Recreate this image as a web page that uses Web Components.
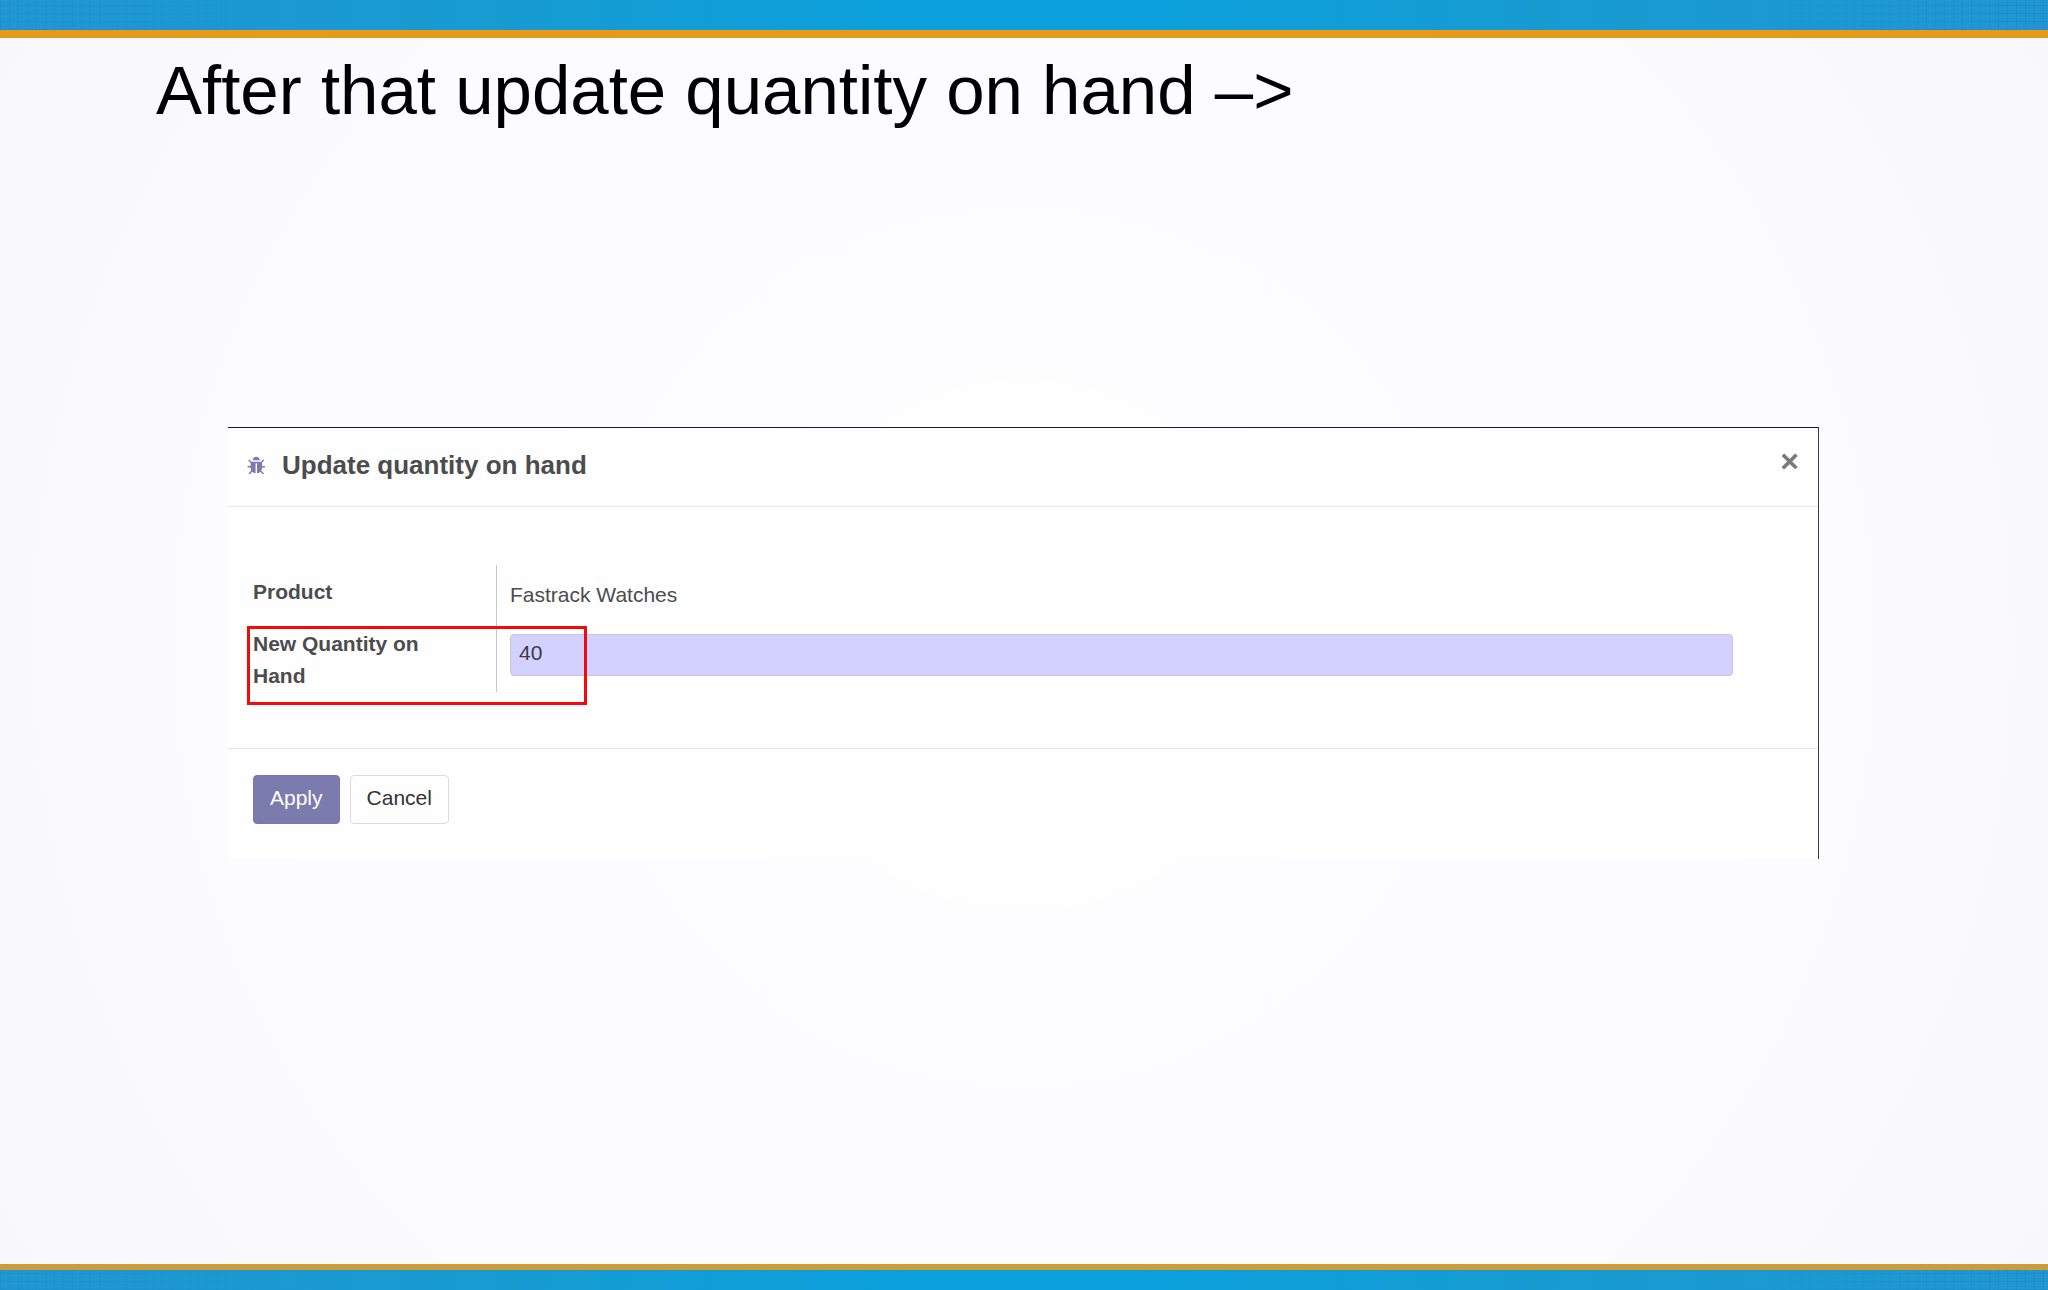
<!DOCTYPE html>
<html lang="en">
<head>
<meta charset="utf-8">
<title>Update quantity on hand</title>
<style>
  body { margin: 0; font-family: "Liberation Sans", Arial, sans-serif; color: #4c4c4e; }
</style>
</head>
<body>
<slide-page>
  <span slot="title">After that update quantity on hand –&gt;</span>
  <modal-dialog>
    <span slot="title">Update quantity on hand</span>
    <static-field label="Product">Fastrack Watches</static-field>
    <quantity-field label="New Quantity on Hand" value="40"></quantity-field>
    <action-button slot="actions" primary>Apply</action-button>
    <action-button slot="actions">Cancel</action-button>
  </modal-dialog>
</slide-page>

<script>
function component(name, markup, setup) {
  const template = document.createElement('template');
  template.innerHTML = markup;
  customElements.define(name, class extends HTMLElement {
    constructor() {
      super();
      this.attachShadow({ mode: 'open' }).append(template.content.cloneNode(true));
    }
    connectedCallback() { if (setup) setup(this, this.shadowRoot); }
  });
}

component('slide-page', `
  <style>
    :host {
      display: flex; flex-direction: column; min-height: 100vh;
      background:
        radial-gradient(circle at 50% 50%, #fefefe 0, #fefefe 262px, #fdfcfe 272px, #fcfbfe 820px, #faf9fc 930px, #f8f7fb 100%);
    }
    .band { background: linear-gradient(90deg, #2196d2, #169bd1 25%, #0aa0dc 45%, #0aa0dc 55%, #169bd1 75%, #2196d2); }
    .weave {
      height: 100%;
      background:
        repeating-linear-gradient(90deg, #0a6fa844 0 1px, transparent 1px 9px),
        repeating-linear-gradient(0deg, #0a6fa844 0 1px, transparent 1px 8px);
      -webkit-mask-image: linear-gradient(90deg, #0008, transparent 15%, transparent 85%, #000c);
      mask-image: linear-gradient(90deg, #0008, transparent 15%, transparent 85%, #000c);
    }
    .top { height: 30px; border-bottom: 8px solid #e69a1a; }
    .bottom { height: 20px; border-top: 6px solid #cd9d3a; }
    h1 { margin: 0; padding: 13px 156px 0; font-size: 69px; line-height: 80px; font-weight: 400; color: #000; }
    main { flex: 1; padding: 296px 229px 0 228px; }
  </style>
  <div class="band top"><div class="weave"></div></div>
  <h1><slot name="title"></slot></h1>
  <main><slot></slot></main>
  <div class="band bottom"><div class="weave"></div></div>
`);

component('modal-dialog', `
  <style>
    :host { display: block; background: #fefefe; border-top: 1px solid #1c1c20; border-right: 1px solid #3a3a3c; }
    header { display: flex; align-items: center; height: 78px; padding: 0 19px 0 19px; border-bottom: 1px solid #e8e5ec; }
    svg { width: 20px; height: 20px; margin-bottom: 3px; fill: #7c7bad; }
    h2 { flex: 1; margin: 0 0 0 15px; padding-bottom: 5px; font-size: 26px; line-height: 30px; font-weight: 700; }
    .close { border: 0; background: none; padding: 0 0 12px; font: 700 32px/32px "Liberation Sans", Arial, sans-serif; color: #7a7a7a; }
    .group { padding: 58px 85px 56px 25px; }
    footer { display: flex; gap: 10px; padding: 26px 25px 35px; border-top: 1px solid #e8e5ec; }
  </style>
  <header>
    <svg viewBox="0 0 1792 1792" aria-hidden="true"><path d="M1632 960q0 26-19 45t-45 19h-224q0 171-67 290l208 209q19 19 19 45t-19 45q-18 19-45 19t-45-19l-198-197q-5 5-15 13t-42 28.5-65 36.5-82 29-97 13v-896h-128v896q-51 0-101.5-13.5t-87-33-66-39-43.5-32.5l-15-14-183 207q-20 21-48 21-24 0-43-16-19-18-20.5-44.500t15.500-46.500l202-227q-58-114-58-274h-224q-26 0-45-19t-19-45 19-45 45-19h224v-294l-173-173q-19-19-19-45t19-45 45-19 45 19l173 173h844l173-173q19-19 45-19t45 19 19 45-19 45l-173 173v294h224q26 0 45 19t19 45zm-480-576h-640q0-133 93.500-226.500t226.500-93.500 226.500 93.500 93.500 226.500z"/></svg>
    <h2><slot name="title"></slot></h2>
    <button class="close" type="button" aria-label="Close">×</button>
  </header>
  <div class="group"><slot></slot></div>
  <footer><slot name="actions"></slot></footer>
`);

component('static-field', `
  <style>
    :host { display: flex; font-size: 21px; line-height: 33px; }
    .label { box-sizing: border-box; width: 244px; padding: 10px 40px 20px 0; border-right: 1px solid #c8c8cc; font-weight: 700; }
    .value { padding: 13px 0 0 13px; }
  </style>
  <div class="label"></div>
  <div class="value"><slot></slot></div>
`, (host, root) => {
  root.querySelector('.label').textContent = host.getAttribute('label');
});

component('quantity-field', `
  <style>
    :host { display: flex; position: relative; font-size: 21px; line-height: 32px; }
    label { box-sizing: border-box; flex: none; width: 244px; padding-right: 40px; border-right: 1px solid #c8c8cc; font-weight: 700; }
    .value { flex: 1; padding: 6px 0 0 13px; }
    input {
      display: block; box-sizing: border-box; width: 100%; height: 42px; padding: 0 8px 4px;
      border: 1px solid #c9c7d0; border-radius: 4px; background: #d2d1ff;
      font: 21px "Liberation Sans", Arial, sans-serif; color: #3a3a48;
    }
    /* highlight frame drawn over the row */
    .mark { position: absolute; left: -6px; top: -2px; box-sizing: border-box; width: 340px; height: 79px; border: 3px solid #f50a0a; pointer-events: none; }
  </style>
  <label for="qty"></label>
  <div class="value"><input id="qty" type="text"></div>
  <div class="mark"></div>
`, (host, root) => {
  root.querySelector('label').textContent = host.getAttribute('label');
  root.querySelector('input').value = host.getAttribute('value');
});

component('action-button', `
  <style>
    :host { display: block; }
    button {
      display: block; height: 49px; padding: 0 16px 5px; border: 1px solid #dcdbe2; border-radius: 4px;
      background: #fefefe; color: #333; font: 21px/33px "Liberation Sans", Arial, sans-serif;
    }
    :host([primary]) button { background: #7c7bad; border-color: #7876aa; color: #fff; }
  </style>
  <button type="button"><slot></slot></button>
`);
</script>
</body>
</html>
